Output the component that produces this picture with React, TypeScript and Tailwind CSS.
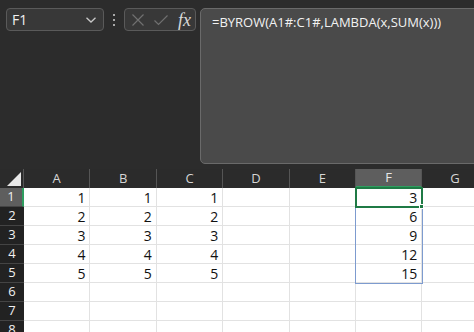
import React from "react";

const COLS = ["A", "B", "C", "D", "E", "F", "G"];
const ROWS = 8;

const DATA: Record<string, string> = {
  A1: "1", B1: "1", C1: "1", F1: "3",
  A2: "2", B2: "2", C2: "2", F2: "6",
  A3: "3", B3: "3", C3: "3", F3: "9",
  A4: "4", B4: "4", C4: "4", F4: "12",
  A5: "5", B5: "5", C5: "5", F5: "15",
};

function Toolbar() {
  return (
    <div className="flex items-start h-[169px] pt-2 pl-[6px]">
      <div className="shrink-0 flex items-center justify-between w-[98px] h-[23px] rounded-[4px] border border-[#5a5a5a] bg-[#383838] pl-[5px] pr-[6px]">
        <span className="text-[14px] text-[#f0f0f0] leading-none">F1</span>
        <svg width="12" height="8" viewBox="0 0 12 8" fill="none">
          <path d="M1.5 1.8 L6 6 L10.5 1.8" stroke="#c8c8c8" strokeWidth="1.3" />
        </svg>
      </div>
      <div className="shrink-0 flex flex-col items-center justify-center gap-[3px] w-[20px] h-[23px]">
        <span className="w-[2px] h-[2px] bg-[#a8a8a8]" />
        <span className="w-[2px] h-[2px] bg-[#a8a8a8]" />
        <span className="w-[2px] h-[2px] bg-[#a8a8a8]" />
      </div>
      <div className="shrink-0 flex items-center w-[72px] h-[23px] rounded-[4px] border border-[#5a5a5a] bg-[#383838] pl-[6px]">
        <svg width="14" height="14" viewBox="0 0 14 14" fill="none">
          <path d="M1.5 1.5 L12.5 12.5 M12.5 1.5 L1.5 12.5" stroke="#707070" strokeWidth="1.2" />
        </svg>
        <svg width="16" height="14" viewBox="0 0 16 14" fill="none" className="ml-[8px]">
          <path d="M1.5 7.5 L5.5 11.5 L14.5 2.5" stroke="#707070" strokeWidth="1.2" />
        </svg>
        <span className="ml-[9px] text-[18px] italic text-[#d8d8d8] leading-none font-['Liberation_Serif',serif]">
          fx
        </span>
      </div>
      <div className="shrink-0 ml-[4px] w-[290px] h-[156px] rounded-[5px] border border-[#6a6a6a] bg-[#4a4a4a] pl-[11px]">
        <span className="text-[13px] text-[#f2f2f2]">
          =BYROW(A1#:C1#,LAMBDA(x,SUM(x)))
        </span>
      </div>
    </div>
  );
}

function Grid() {
  return (
    <div className="relative">
      <div className="flex h-[19px] bg-[#2b2b2b]">
        <div className="relative w-[24px] shrink-0 border-r border-[#555]">
          <div className="absolute right-[2px] bottom-[2px] w-0 h-0 border-l-[14px] border-l-transparent border-b-[14px] border-b-[#e8e8e8]" />
        </div>
        {COLS.map((c) => (
          <div
            key={c}
            className={
              c === "F"
                ? "w-[66.4px] shrink-0 flex items-center justify-center text-[13px] text-[#e6e6e6] bg-[#5e5e5e] border-r border-[#555] border-b-2 border-b-[#2e9d5f]"
                : "w-[66.4px] shrink-0 flex items-center justify-center text-[13px] text-[#d6d6d6] border-r border-[#555]"
            }
          >
            {c}
          </div>
        ))}
      </div>
      {Array.from({ length: ROWS }, (_, i) => i + 1).map((r) => (
        <div key={r} className="flex h-[19px]">
          <div
            className={
              r === 1
                ? "w-[24px] shrink-0 flex items-center justify-center text-[13px] text-[#f0f0f0] bg-[#5e5e5e] border-b border-[#444] border-r-2 border-r-[#2e9d5f]"
                : "w-[24px] shrink-0 flex items-center justify-center text-[13px] text-[#f0f0f0] bg-[#222222] border-b border-[#444]"
            }
          >
            {r}
          </div>
          {COLS.map((c) => (
            <div
              key={c}
              className="w-[66.4px] shrink-0 flex items-center justify-end pr-[4px] bg-white border-r border-b border-[#e2e2e2] text-[14px] text-[#111]"
            >
              {DATA[`${c}${r}`] ?? ""}
            </div>
          ))}
        </div>
      ))}
      {/* spill range F1:F5 */}
      <div className="absolute left-[355px] top-[19px] w-[67.5px] h-[96px] border border-[#7d9bcf] pointer-events-none" />
      {/* active cell F1 */}
      <div className="absolute left-[355px] top-[18px] w-[67.5px] h-[21px] border-2 border-[#1f7a45] pointer-events-none" />
      <div className="absolute left-[419px] top-[35px] w-[5px] h-[5px] bg-[#1f7a45] border border-white" />
    </div>
  );
}

export default function App() {
  return (
    <div className="w-[474px] h-[332px] overflow-hidden bg-[#2c2c2c] font-['Open_Sans','Noto_Sans',sans-serif]">
      <Toolbar />
      <Grid />
    </div>
  );
}
